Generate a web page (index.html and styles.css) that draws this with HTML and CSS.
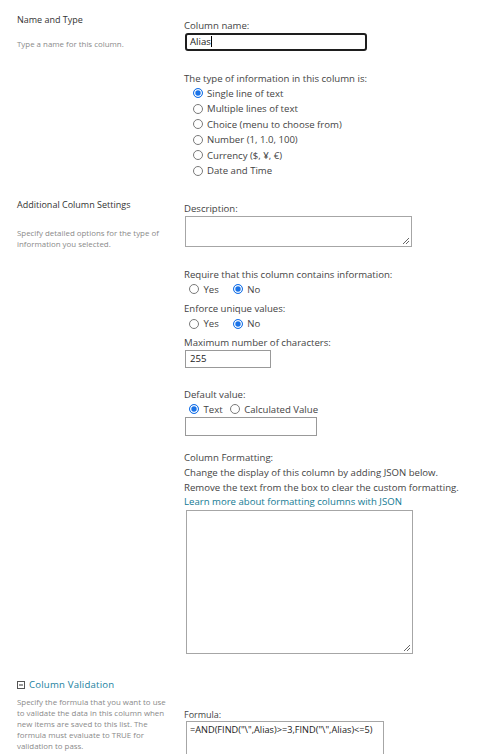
FILE: index.html
```html
<!DOCTYPE html>
<html>
<head>
<meta charset="utf-8">
<link rel="stylesheet" href="styles.css">
</head>
<body>
<div class="page">
  <section class="sec sec1">
    <div class="left">
      <div class="title">Name and Type</div>
      <div class="desc desc1">Type a name for this column.</div>
    </div>
    <div class="right r1">
      <div class="lbl">Column name:</div>
      <div class="input focus">Alias<span class="caret"></span></div>
      <div class="lbl gap20">The type of information in this column is:</div>
      <div class="typelist">
        <div class="opt"><span class="radio on"></span>Single line of text</div>
        <div class="opt"><span class="radio"></span>Multiple lines of text</div>
        <div class="opt"><span class="radio"></span>Choice (menu to choose from)</div>
        <div class="opt"><span class="radio"></span>Number (1, 1.0, 100)</div>
        <div class="opt"><span class="radio"></span>Currency ($, ¥, €)</div>
        <div class="opt"><span class="radio"></span>Date and Time</div>
      </div>
    </div>
  </section>

  <section class="sec sec2">
    <div class="left">
      <div class="title">Additional Column Settings</div>
      <div class="desc desc2">Specify detailed options for the type of<br>information you selected.</div>
    </div>
    <div class="right r2">
      <div class="lbl">Description:</div>
      <div class="area desc-area"><svg class="grip" width="8" height="8" viewBox="0 0 8 8"><path d="M7 1 L1 7 M7 4 L4 7" stroke="#666" stroke-width="1"/></svg></div>
      <div class="lbl g19">Require that this column contains information:</div>
      <div class="yn"><span class="radio"></span><span class="yes">Yes</span><span class="radio on"></span>No</div>
      <div class="lbl g3">Enforce unique values:</div>
      <div class="yn"><span class="radio"></span><span class="yes">Yes</span><span class="radio on"></span>No</div>
      <div class="lbl g4">Maximum number of characters:</div>
      <div class="input small">255</div>
      <div class="lbl g17">Default value:</div>
      <div class="yn"><span class="radio on"></span><span class="txt">Text</span><span class="radio"></span>Calculated Value</div>
      <div class="input wide"></div>
      <div class="lbl g13">Column Formatting:</div>
      <div class="lbl">Change the display of this column by adding JSON below.</div>
      <div class="lbl">Remove the text from the box to clear the custom formatting.</div>
      <a class="lbl link">Learn more about formatting columns with JSON</a>
      <div class="area json-area"><svg class="grip" width="8" height="8" viewBox="0 0 8 8"><path d="M7 1 L1 7 M7 4 L4 7" stroke="#666" stroke-width="1"/></svg></div>
    </div>
  </section>

  <section class="sec sec3">
    <div class="left">
      <div class="vtitle"><svg class="minus" width="8" height="8" viewBox="0 0 8 8"><rect x="0.5" y="0.5" width="7" height="7" fill="#fff" stroke="#555"/><path d="M2 4 H6" stroke="#333" stroke-width="1"/></svg>Column Validation</div>
      <div class="desc desc3">Specify the formula that you want to use<br>to validate the data in this column when<br>new items are saved to this list. The<br>formula must evaluate to TRUE for<br>validation to pass.</div>
    </div>
    <div class="right r3">
      <div class="flbl">Formula:</div>
      <div class="area formula">=AND(FIND("\",Alias)&gt;=3,FIND("\",Alias)&lt;=5)</div>
    </div>
  </section>
</div>
</body>
</html>
```
FILE: styles.css
```css
html, body {
  margin: 0;
  padding: 0;
  background: #fff;
}
body {
  font-family: "Open Sans", "Noto Sans", sans-serif;
  color: #444;
  overflow: hidden;
}
.page {
  width: 480px;
  height: 754px;
  overflow: hidden;
}
.sec {
  display: flex;
}
.left {
  width: 184px;
  padding-left: 17px;
  box-sizing: border-box;
  flex: none;
}
.right {
  flex: 1;
  display: flex;
  flex-direction: column;
  align-items: flex-start;
}
.title {
  font-size: 9px;
  line-height: 14px;
  color: #333;
  white-space: nowrap;
}
.desc {
  font-size: 7.9px;
  line-height: 11px;
  color: #8a8a8a;
  white-space: nowrap;
}
.sec1 .left { padding-top: 13px; }
.desc1 { margin-top: 12px; }
.r1 { padding-top: 17.5px; }

.lbl {
  font-size: 9.6px;
  line-height: 15px;
  color: #444;
  white-space: nowrap;
}
.input {
  box-sizing: border-box;
  height: 18px;
  border: 1px solid #999;
  font-size: 9.6px;
  line-height: 16px;
  padding-left: 4px;
  color: #222;
  margin-left: 1px;
  flex: none;
}
.input.focus {
  width: 182px;
  border: 2px solid #1e1e1e;
  border-radius: 3px;
  line-height: 14px;
  padding-left: 3px;
}
.caret {
  display: inline-block;
  width: 1px;
  height: 11px;
  background: #000;
  vertical-align: -2px;
}
.gap20 { margin-top: 20px; }
.typelist {
  padding-left: 9px;
}
.opt {
  font-size: 9.6px;
  line-height: 15.5px;
  color: #444;
  display: flex;
  align-items: center;
  white-space: nowrap;
}
.radio {
  box-sizing: border-box;
  width: 10px;
  height: 10px;
  border-radius: 50%;
  border: 1px solid #7a7a7a;
  background: #fff;
  margin-right: 4px;
  flex: none;
  display: inline-block;
}
.radio.on {
  border: 1.5px solid #1a73e8;
  background: #1a73e8;
  box-shadow: inset 0 0 0 1.3px #fff;
}

.sec2 { margin-top: 19px; }
.r2 { padding-top: 3.5px; }
.area {
  box-sizing: border-box;
  border: 1px solid #a6a6a6;
  position: relative;
  margin-left: 1px;
}
.grip {
  position: absolute;
  right: 1px;
  bottom: 1px;
}
.desc-area {
  width: 227px;
  height: 31px;
}
.desc2 { margin-top: 16px; }
.g19 { margin-top: 19.5px; }
.g3 { margin-top: 4.5px; }
.g4 { margin-top: 4px; }
.g17 { margin-top: 18.5px; }
.g13 { margin-top: 14.5px; }
.yn {
  font-size: 9.6px;
  line-height: 15px;
  color: #444;
  display: flex;
  align-items: center;
  padding-left: 5px;
  white-space: nowrap;
}
.yn .radio { margin-right: 4.5px; }
.yes { margin-right: 14px; }
.txt { margin-right: 7px; }
.input.small {
  width: 86px;
}
.input.wide {
  width: 132px;
  height: 19px;
}
.link {
  color: #137a94;
  line-height: 14px;
}
.json-area {
  width: 227px;
  height: 144px;
  margin-left: 2px;
  margin-top: 0.5px;
}

.sec3 { margin-top: 24px; }
.vtitle {
  font-size: 9.6px;
  line-height: 14px;
  color: #1a7fa0;
  display: flex;
  align-items: center;
  letter-spacing: 0.2px;
}
.minus {
  margin-right: 4px;
  flex: none;
}
.desc3 { margin-top: 5.5px; }
.r3 { padding-top: 30.5px; }
.flbl {
  font-size: 9px;
  line-height: 13px;
  color: #444;
}
.formula {
  width: 198px;
  height: 60px;
  margin-left: 2px;
  font-size: 9.2px;
  line-height: 14px;
  padding: 1px 3px;
  color: #222;
  white-space: nowrap;
}
```
